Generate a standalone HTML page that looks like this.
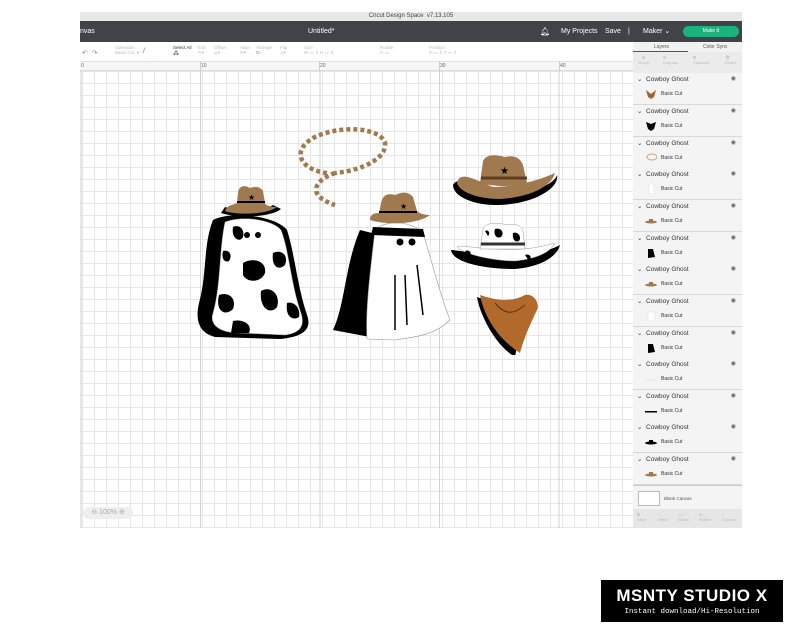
<!DOCTYPE html>
<html><head><meta charset="utf-8"><style>
*{margin:0;padding:0;box-sizing:border-box}
body{width:794px;height:642px;background:#fff;font-family:"Liberation Sans",sans-serif;position:relative;overflow:hidden}
.abs{position:absolute}
.layer{position:absolute;left:633px;width:109px;height:32px;background:#f4f4f4;border-bottom:1px solid #d8d8d8}
.layer .h{position:absolute;left:4px;top:2px;font-size:6.5px;color:#333}
.layer .e{position:absolute;right:6px;top:2px;font-size:6px;color:#666}
.layer .t{position:absolute;left:28px;top:18px;font-size:5px;color:#333}
.layer .th{position:absolute;left:12px;top:15px;width:12px;height:11px}
</style></head><body>
<div class="abs" style="left:80px;top:12px;width:662px;height:9px;background:#e8e8e8;font-size:6px;color:#444;text-align:center;line-height:9px">Cricut Design Space &nbsp;v7.13.105</div>
<div class="abs" style="left:80px;top:21px;width:662px;height:21px;background:#404448;color:#fff;font-size:7px;line-height:21px">
 <span class="abs" style="left:0">nvas</span>
 <span class="abs" style="left:228px">Untitled*</span>
 <span class="abs" style="left:460px;font-size:8px">&#x1F514;&#xFE0E;</span>
 <span class="abs" style="left:481px">My Projects</span>
 <span class="abs" style="left:525px">Save</span>
 <span class="abs" style="left:548px">|</span>
 <span class="abs" style="left:563px">Maker ⌄</span>
 <span class="abs" style="left:603px;top:5px;width:56px;height:11px;border-radius:6px;background:#1db27b;font-size:5px;line-height:11px;text-align:center">Make It</span>
</div>
<div class="abs" style="left:80px;top:42px;width:553px;height:20px;background:#fff;border-bottom:1px solid #e0e0e0;font-size:4.5px;color:#bbb">
 <span class="abs" style="left:2px;top:7px;font-size:7px;color:#888">↶ &nbsp;↷</span>
 <span class="abs" style="left:35px;top:3px">Operation<br>Basic Cut &nbsp;▾</span>
 <span class="abs" style="left:63px;top:6px;color:#d44;font-size:7px">/</span>
 <span class="abs" style="left:93px;top:3px;color:#333">Select All<br><span style="font-size:6px">⁂</span></span>
 <span class="abs" style="left:118px;top:3px">Edit<br>✎▾</span>
 <span class="abs" style="left:134px;top:3px">Offset<br>◎▾</span>
 <span class="abs" style="left:160px;top:3px">Align<br>⊫▾</span>
 <span class="abs" style="left:176px;top:3px">Arrange<br>⧉▾</span>
 <span class="abs" style="left:200px;top:3px">Flip<br>⊿▾</span>
 <span class="abs" style="left:224px;top:3px">Size<br>W ▭ ⇕ H ▭ ⇕</span>
 <span class="abs" style="left:300px;top:3px">Rotate<br>↻ ▭</span>
 <span class="abs" style="left:349px;top:3px">Position<br>X ▭ ⇕ Y ▭ ⇕</span>
</div>
<div class="abs" style="left:80px;top:62px;width:553px;height:9px;background:#f6f6f6;border-bottom:1px solid #ddd;font-size:5px;color:#666">
 <span class="abs" style="left:1px;top:1px">0</span><span class="abs" style="left:121px;top:1px">10</span><span class="abs" style="left:240px;top:1px">20</span><span class="abs" style="left:360px;top:1px">30</span><span class="abs" style="left:480px;top:1px">40</span>
 <div class="abs" style="left:120px;top:0;width:1px;height:9px;background:#ccc"></div><div class="abs" style="left:239px;top:0;width:1px;height:9px;background:#ccc"></div><div class="abs" style="left:359px;top:0;width:1px;height:9px;background:#ccc"></div><div class="abs" style="left:479px;top:0;width:1px;height:9px;background:#ccc"></div>
</div>
<div class="abs" style="left:80px;top:71px;width:553px;height:457px;background-color:#fff;background-image:linear-gradient(90deg,#e6e6e6 1px,transparent 1px),linear-gradient(#e6e6e6 1px,transparent 1px);background-size:12px 12px;background-position:2px 0"></div>
<div class="abs" style="left:80px;top:71px;width:553px;height:457px;background-image:linear-gradient(90deg,#d2d2d2 1px,transparent 1px);background-size:119.5px 12px;background-position:120px 0"></div>
<div class="abs" style="left:83px;top:507px;width:50px;height:12px;border-radius:6px;background:#eee;font-size:7px;color:#aaa;line-height:12px;text-align:center">⊖ 100% ⊕</div>
<svg class="abs" style="left:195px;top:125px" width="370" height="230" viewBox="0 0 370 230">
 <!-- left cow ghost -->
 <path d="M18 95 C8 120 12 150 4 178 C0 195 4 208 20 212 L85 214 C105 212 118 206 112 190 C102 160 100 130 92 105 C80 90 35 86 18 95Z" fill="#000"/>
 <path d="M30 97 C24 125 26 160 18 188 C14 200 25 208 45 208 L90 210 C106 208 110 200 106 188 C96 160 94 125 86 105 C78 95 48 90 30 97Z" fill="#fff" stroke="#999" stroke-width=".5"/>
 <path d="M38 102 c6-3 12 2 10 10 c-3 6-12 2-10-10Z M48 138 c10-6 24-2 22 10 c-4 10-18 10-22 2Z M78 128 c8-4 16 2 12 12 c-6 6-14 2-12-12Z M24 170 c10-4 18 4 14 14 c-8 8-18 2-14-14Z M66 166 c10-6 20 4 16 16 c-6 8-18 2-16-16Z M92 178 c6-2 14 4 12 14 c-6 4-14 0-12-14Z M38 196 c8-2 20 2 16 12 l-18 0Z M28 126 c6-2 10 4 6 10 c-4 2-8-2-6-10Z" fill="#000"/>
 <circle cx="52" cy="110" r="3" fill="#000"/><circle cx="63" cy="110" r="3" fill="#000"/>
 <path d="M26 88 C40 93 75 93 86 84 L78 80 C70 86 40 86 30 82Z" fill="#000"/>
 <path d="M30 86 C40 90 72 90 82 82 C75 82 70 80 70 78 L68 66 C64 60 58 62 55 63 C50 60 44 60 43 68 L42 78 C38 80 32 80 30 86Z" fill="#a07a4e"/>
 <path d="M42 77 L70 77" stroke="#000" stroke-width="2"/>
 <text x="53" y="75" font-size="8" fill="#000">★</text>
 <!-- lasso -->
 <g fill="none" stroke="#a07a4e" stroke-width="4.5" stroke-dasharray="4 3">
  <path d="M132 48 C105 45 95 25 120 12 C145 0 185 2 190 18 C192 32 170 45 140 48"/>
  <path d="M140 48 C120 55 110 70 140 80"/>
 </g>
 <!-- middle ghost -->
 <path d="M165 105 C150 140 150 180 138 205 L175 212 C180 180 185 140 185 110Z" fill="#000"/>
 <path d="M180 105 C190 95 215 95 228 108 C238 140 245 170 255 195 C240 210 220 212 200 215 L172 214 C170 185 176 140 180 105Z" fill="#fff" stroke="#999" stroke-width=".6"/>
 <path d="M178 102 L228 104 L230 112 L176 110Z" fill="#000"/>
 <circle cx="205" cy="117" r="3.5" fill="#000"/><circle cx="217" cy="117" r="3.5" fill="#000"/>
 <path d="M200 150 L200 205 M210 150 L212 200 M222 140 L228 190" stroke="#000" stroke-width="1.5"/>
 <path d="M175 95 C190 100 222 100 235 90 C228 90 224 88 222 86 L218 72 C212 65 205 68 200 70 C192 68 188 70 186 78 L184 88 C178 88 175 90 175 95Z" fill="#a07a4e"/>
 <path d="M184 87 L222 87" stroke="#000" stroke-width="2"/>
 <text x="205" y="84" font-size="8" fill="#000">★</text>
 <!-- hat top right -->
 <path d="M258 60 C262 50 290 58 310 72 C330 70 360 60 362 50 C365 62 340 80 300 80 C280 80 258 72 258 60Z" fill="#000"/>
 <path d="M262 58 C265 45 280 55 298 62 C320 62 345 55 360 48 C356 62 335 72 305 74 C285 74 265 68 262 58Z" fill="#a07a4e"/>
 <path d="M285 58 L288 36 C292 28 302 30 310 32 C318 30 325 32 328 40 L332 58 C318 62 300 62 285 58Z" fill="#a07a4e"/>
 <path d="M286 53 L332 53" stroke="#5a3f22" stroke-width="3"/>
 <text x="305" y="49" font-size="10" fill="#000">★</text>
 <!-- cow hat -->
 <path d="M256 125 C258 138 290 144 320 144 C345 142 362 132 365 120 C350 128 330 130 310 130 C285 130 262 125 256 125Z" fill="#000"/>
 <path d="M262 122 C270 130 300 136 320 136 C340 134 355 128 360 118 C345 122 330 126 300 124 C285 124 270 120 262 122Z" fill="#fff" stroke="#999" stroke-width=".5"/>
 <path d="M285 124 L288 104 C292 96 305 98 312 100 C320 98 326 100 328 106 L330 124Z" fill="#fff" stroke="#999" stroke-width=".5"/>
 <path d="M300 104 c6-2 10 4 6 8 c-4 2-8-2-6-8Z M318 108 c5-2 9 4 6 8 c-4 2-7-2-6-8Z M270 126 c4-2 8 2 4 6Z M330 130 c4-2 8 2 4 6Z M290 106 c3-2 6 2 3 5Z" fill="#000"/>
 <path d="M286 119 L330 119" stroke="#333" stroke-width="3"/>
 <!-- bandana -->
 <path d="M282 172 C285 190 300 220 320 232 L325 205 C315 200 300 190 290 175Z" fill="#000"/>
 <path d="M285 170 C300 175 315 178 330 170 C340 168 345 180 342 185 C335 200 330 210 325 228 C305 215 290 195 285 170Z" fill="#b26a2c"/>
 <path d="M300 178 C310 190 318 190 330 180" stroke="#5a3010" fill="none"/>
</svg>
<div class="abs" style="left:633px;top:42px;width:109px;height:31px;background:#f2f2f2;font-size:5px;color:#555">
 <span class="abs" style="left:21px;top:2px">Layers</span><span class="abs" style="left:70px;top:2px">Color Sync</span>
 <div class="abs" style="left:0;top:9px;width:55px;height:1px;background:#555"></div>
 <div class="abs" style="left:0;top:10px;width:109px;height:21px;background:#ebebeb;color:#bbb;font-size:4px">
  <span class="abs" style="left:5px;top:3px;text-align:center">⊠<br>Group</span><span class="abs" style="left:30px;top:3px">⊞<br>Ungroup</span><span class="abs" style="left:60px;top:3px">⧉<br>Duplicate</span><span class="abs" style="left:92px;top:3px">🗑&#xFE0E;<br>Delete</span>
 </div>
</div>
<div class="layer" style="top:73px"><span class="h">⌄ &nbsp;Cowboy Ghost</span><span class="e">◉</span><svg class="th"><path d="M1 2 L6 6 L11 2 L9 9 L6 11 L3 9Z" fill="#a5622c"/></svg><span class="t">Basic Cut</span></div>
<div class="layer" style="top:105px"><span class="h">⌄ &nbsp;Cowboy Ghost</span><span class="e">◉</span><svg class="th"><path d="M1 2 L6 4 L11 2 L9 9 L6 11 L3 9Z" fill="#000"/></svg><span class="t">Basic Cut</span></div>
<div class="layer" style="top:137px"><span class="h">⌄ &nbsp;Cowboy Ghost</span><span class="e">◉</span><svg class="th"><ellipse cx="7" cy="5" rx="5" ry="3" fill="none" stroke="#c9a37a"/></svg><span class="t">Basic Cut</span></div>
<div class="layer" style="top:168px"><span class="h">⌄ &nbsp;Cowboy Ghost</span><span class="e">◉</span><svg class="th"><rect x="4" y="1" width="5" height="10" fill="#fff" stroke="#ddd" stroke-width=".5"/></svg><span class="t">Basic Cut</span></div>
<div class="layer" style="top:200px"><span class="h">⌄ &nbsp;Cowboy Ghost</span><span class="e">◉</span><svg class="th"><ellipse cx="6" cy="7" rx="6" ry="1.5" fill="#a07a4e"/><rect x="4" y="4" width="4" height="3" fill="#a07a4e"/></svg><span class="t">Basic Cut</span></div>
<div class="layer" style="top:232px"><span class="h">⌄ &nbsp;Cowboy Ghost</span><span class="e">◉</span><svg class="th"><path d="M3 2 L8 2 L10 10 L3 11Z" fill="#000"/></svg><span class="t">Basic Cut</span></div>
<div class="layer" style="top:263px"><span class="h">⌄ &nbsp;Cowboy Ghost</span><span class="e">◉</span><svg class="th"><ellipse cx="6" cy="7" rx="6" ry="1.5" fill="#a07a4e"/><rect x="4" y="4" width="4" height="3" fill="#a07a4e"/></svg><span class="t">Basic Cut</span></div>
<div class="layer" style="top:295px"><span class="h">⌄ &nbsp;Cowboy Ghost</span><span class="e">◉</span><svg class="th"><rect x="3" y="2" width="7" height="9" fill="#fff" stroke="#ddd" stroke-width=".5"/></svg><span class="t">Basic Cut</span></div>
<div class="layer" style="top:327px"><span class="h">⌄ &nbsp;Cowboy Ghost</span><span class="e">◉</span><svg class="th"><path d="M3 2 L8 2 L10 10 L3 11Z" fill="#000"/></svg><span class="t">Basic Cut</span></div>
<div class="layer" style="top:358px"><span class="h">⌄ &nbsp;Cowboy Ghost</span><span class="e">◉</span><svg class="th"><ellipse cx="6" cy="7" rx="6" ry="1.5" fill="#eee"/></svg><span class="t">Basic Cut</span></div>
<div class="layer" style="top:390px"><span class="h">⌄ &nbsp;Cowboy Ghost</span><span class="e">◉</span><svg class="th"><rect x="0" y="6" width="12" height="1.5" fill="#000"/></svg><span class="t">Basic Cut</span></div>
<div class="layer" style="top:421px"><span class="h">⌄ &nbsp;Cowboy Ghost</span><span class="e">◉</span><svg class="th"><ellipse cx="6" cy="7" rx="6" ry="1.5" fill="#000"/><rect x="4" y="4" width="4" height="3" fill="#000"/></svg><span class="t">Basic Cut</span></div>
<div class="layer" style="top:453px"><span class="h">⌄ &nbsp;Cowboy Ghost</span><span class="e">◉</span><svg class="th"><ellipse cx="6" cy="7" rx="6" ry="1.5" fill="#a07a4e"/><rect x="4" y="4" width="4" height="3" fill="#a07a4e"/></svg><span class="t">Basic Cut</span></div>
<div class="abs" style="left:633px;top:485px;width:109px;height:24px;background:#f4f4f4;border-top:1px solid #ccc">
 <div class="abs" style="left:5px;top:5px;width:22px;height:15px;background:#fff;border:1px solid #bbb"></div>
 <span class="abs" style="left:31px;top:10px;font-size:4.5px;color:#555">Blank Canvas</span>
</div>
<div class="abs" style="left:633px;top:509px;width:109px;height:19px;background:#e6e6e6;font-size:4px;color:#bbb">
 <span class="abs" style="left:4px;top:3px">⧉<br>Slice</span><span class="abs" style="left:25px;top:3px">◌<br>Weld</span><span class="abs" style="left:45px;top:3px">⊂⊃<br>Attach</span><span class="abs" style="left:66px;top:3px">⊗<br>Flatten</span><span class="abs" style="left:89px;top:3px">◌<br>Contour</span>
</div>
<div class="abs" style="left:601px;top:580px;width:182px;height:42px;background:#000;color:#fff;text-align:center">
 <div style="font-size:17px;font-weight:bold;margin-top:6px;letter-spacing:0.5px">MSNTY STUDIO X</div>
 <div style="font-family:'Liberation Mono',monospace;font-size:7.5px;margin-top:2px">Instant download/Hi-Resolution</div>
</div>
</body></html>
